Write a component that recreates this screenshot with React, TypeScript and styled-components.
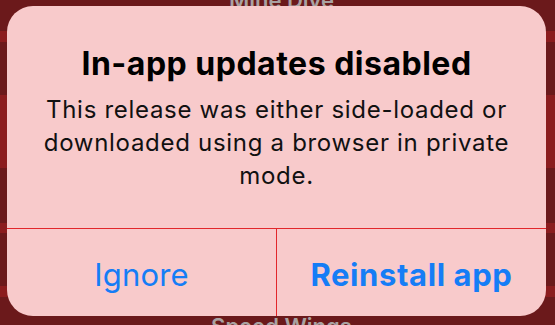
import React from "react";
import styled, { createGlobalStyle } from "styled-components";

const Global = createGlobalStyle`
  html, body { margin: 0; padding: 0; }
  body {
    width: 555px;
    height: 325px;
    overflow: hidden;
    background: #6b191b;
    font-family: Inter, "Noto Sans", "Liberation Sans", sans-serif;
  }
`;

const Screen = styled.div`
  position: relative;
  width: 555px;
  height: 325px;
  overflow: hidden;
`;

const Backdrop = styled.div`
  display: flex;
  flex-direction: column;
  width: 100%;
  height: 100%;
`;

const Band = styled.div<{ $h: number; $bright?: boolean }>`
  height: ${(p) => p.$h}px;
  flex: none;
  background: ${(p) => (p.$bright ? "#8b1c1e" : "#6b191b")};
  display: flex;
  justify-content: center;
  overflow: hidden;
`;

const Label = styled.span<{ $top: number }>`
  margin-top: ${(p) => p.$top}px;
  margin-left: 8px;
  color: #a9a2a2;
  font-size: 22px;
  font-weight: 600;
  line-height: 26px;
  white-space: nowrap;
`;

const Dialog = styled.div`
  position: absolute;
  left: 7px;
  top: 6px;
  width: 539px;
  height: 310px;
  border-radius: 26px;
  background: #f8cacb;
  display: flex;
  flex-direction: column;
  overflow: hidden;
`;

const Body = styled.div`
  height: 223px;
  flex: none;
  display: flex;
  flex-direction: column;
  align-items: center;
  padding-top: 40px;
  box-sizing: border-box;
  border-bottom: 1px solid #e2262b;
`;

const Title = styled.div`
  font-size: 32px;
  font-weight: 700;
  color: #000;
  line-height: 36px;
  letter-spacing: 0.5px;
`;

const Message = styled.div`
  margin-top: 11px;
  width: 480px;
  text-align: center;
  font-size: 24px;
  line-height: 33px;
  color: #111;
  letter-spacing: 0.7px;
`;

const Actions = styled.div`
  flex: 1;
  display: grid;
  grid-template-columns: 269px 1fr;
`;

const Action = styled.button<{ $bold?: boolean }>`
  appearance: none;
  border: 0;
  background: transparent;
  padding: 3px 0 0;
  font-family: inherit;
  font-size: 31px;
  font-weight: ${(p) => (p.$bold ? 700 : 400)};
  color: #157df6;
  letter-spacing: ${(p) => (p.$bold ? "0.6px" : "0.2px")};
  display: flex;
  align-items: center;
  justify-content: center;
  & + & {
    border-left: 1px solid #e2262b;
  }
`;

export default function App() {
  return (
    <>
      <Global />
      <Screen>
        <Backdrop>
          <Band $h={31}>
            <Label $top={-13}>Mine Dive</Label>
          </Band>
          <Band $h={11} $bright />
          <Band $h={53} />
          <Band $h={73} $bright />
          <Band $h={55} />
          <Band $h={10} $bright />
          <Band $h={53} />
          <Band $h={11} $bright />
          <Band $h={28}>
            <Label $top={16}>Speed Wings</Label>
          </Band>
        </Backdrop>
        <Dialog>
          <Body>
            <Title>In-app updates disabled</Title>
            <Message>
              This release was either side-loaded or downloaded using a browser in private mode.
            </Message>
          </Body>
          <Actions>
            <Action>Ignore</Action>
            <Action $bold>Reinstall app</Action>
          </Actions>
        </Dialog>
      </Screen>
    </>
  );
}
